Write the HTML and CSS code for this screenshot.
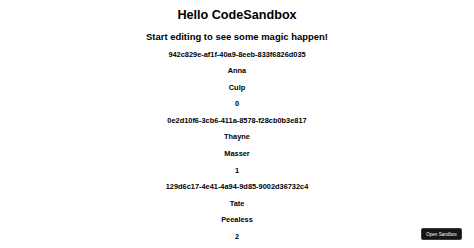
FILE: index.html
```html
<!DOCTYPE html>
<html lang="en">
<head>
<meta charset="utf-8">
<title>CodeSandbox</title>
<link rel="stylesheet" href="styles.css">
</head>
<body>
<div class="app">
  <h1 class="title">Hello CodeSandbox</h1>
  <h2 class="subtitle">Start editing to see some magic happen!</h2>
  <h3 class="item">942c829e-af1f-40a9-8eeb-833f6826d035</h3>
  <h3 class="item">Anna</h3>
  <h3 class="item">Culp</h3>
  <h3 class="item">0</h3>
  <h3 class="item">0e2d10f6-3cb6-411a-8578-f28cb0b3e817</h3>
  <h3 class="item">Thayne</h3>
  <h3 class="item">Masser</h3>
  <h3 class="item">1</h3>
  <h3 class="item">129d6c17-4e41-4a94-9d85-9002d36732c4</h3>
  <h3 class="item">Tate</h3>
  <h3 class="item">Peealess</h3>
  <h3 class="item">2</h3>
</div>
<a class="open-btn" href="#">Open Sandbox</a>
</body>
</html>
```
FILE: styles.css
```css
html, body {
  margin: 0;
  padding: 0;
  background: #ffffff;
  overflow: hidden;
}

.app {
  font-family: "Liberation Sans", Arial, sans-serif;
  text-align: center;
  color: #000000;
}

.title {
  font-size: 12.64px;
  font-weight: bold;
  line-height: normal;
  margin: 8.47px 0 8.9px;
}

.subtitle {
  font-size: 9.48px;
  font-weight: bold;
  line-height: normal;
  margin: 8.9px 0 7.3px;
}

.item {
  font-size: 7.4px;
  font-weight: bold;
  line-height: 9.27px;
  margin: 7.3px 0;
}

.item:last-child {
  margin-bottom: 0;
}

.open-btn {
  position: fixed;
  right: 12px;
  bottom: 8px;
  box-sizing: border-box;
  width: 41px;
  height: 12px;
  display: flex;
  align-items: center;
  justify-content: center;
  background: #151515;
  border: 1px solid #3a3a3a;
  border-radius: 2px;
  color: #ffffff;
  font-family: "Liberation Sans", Arial, sans-serif;
  font-size: 4.6px;
  text-decoration: none;
  white-space: nowrap;
}
```
